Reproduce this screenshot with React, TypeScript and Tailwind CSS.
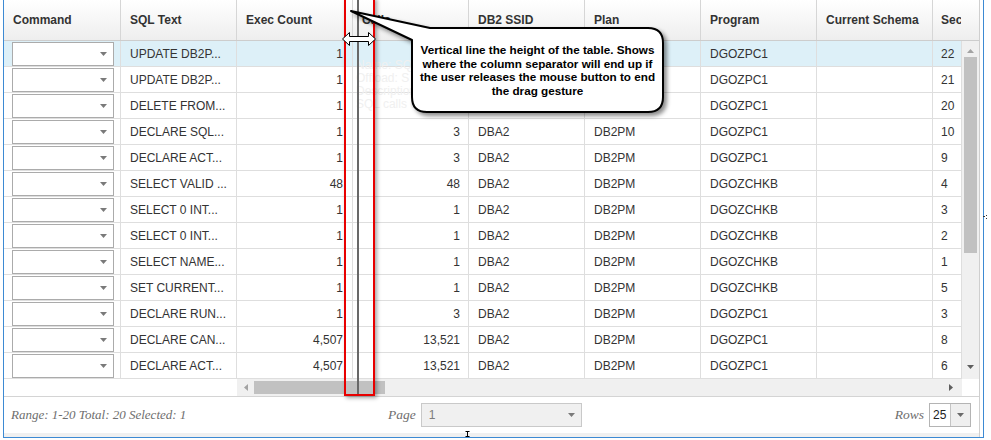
import React from 'react'

interface Row {
  sql: string
  exec: string
  calls: string
  ssid: string
  plan: string
  program: string
  sec: string
}

// first three rows sit under the callout, their middle cells are hidden there
const rows: Row[] = [
  { sql: 'UPDATE DB2P...', exec: '1', calls: '', ssid: '', plan: '', program: 'DGOZPC1', sec: '22' },
  { sql: 'UPDATE DB2P...', exec: '1', calls: '', ssid: '', plan: '', program: 'DGOZPC1', sec: '21' },
  { sql: 'DELETE FROM...', exec: '1', calls: '', ssid: '', plan: '', program: 'DGOZPC1', sec: '20' },
  { sql: 'DECLARE SQL...', exec: '1', calls: '3', ssid: 'DBA2', plan: 'DB2PM', program: 'DGOZPC1', sec: '10' },
  { sql: 'DECLARE ACT...', exec: '1', calls: '3', ssid: 'DBA2', plan: 'DB2PM', program: 'DGOZPC1', sec: '9' },
  { sql: 'SELECT VALID ...', exec: '48', calls: '48', ssid: 'DBA2', plan: 'DB2PM', program: 'DGOZCHKB', sec: '4' },
  { sql: 'SELECT 0 INT...', exec: '1', calls: '1', ssid: 'DBA2', plan: 'DB2PM', program: 'DGOZCHKB', sec: '3' },
  { sql: 'SELECT 0 INT...', exec: '1', calls: '1', ssid: 'DBA2', plan: 'DB2PM', program: 'DGOZCHKB', sec: '2' },
  { sql: 'SELECT NAME...', exec: '1', calls: '1', ssid: 'DBA2', plan: 'DB2PM', program: 'DGOZCHKB', sec: '1' },
  { sql: 'SET CURRENT...', exec: '1', calls: '1', ssid: 'DBA2', plan: 'DB2PM', program: 'DGOZCHKB', sec: '5' },
  { sql: 'DECLARE RUN...', exec: '1', calls: '3', ssid: 'DBA2', plan: 'DB2PM', program: 'DGOZPC1', sec: '3' },
  { sql: 'DECLARE CAN...', exec: '4,507', calls: '13,521', ssid: 'DBA2', plan: 'DB2PM', program: 'DGOZPC1', sec: '8' },
  { sql: 'DECLARE ACT...', exec: '4,507', calls: '13,521', ssid: 'DBA2', plan: 'DB2PM', program: 'DGOZPC1', sec: '6' },
]

function Caret({ color = '#7a7a7a', dir = 'down' }: { color?: string; dir?: 'down' | 'up' | 'left' | 'right' }) {
  const pts = {
    down: '0,0 7,0 3.5,4',
    up: '0,4 7,4 3.5,0',
    left: '4,0 4,7 0,3.5',
    right: '0,0 0,7 4,3.5',
  }[dir]
  const horiz = dir === 'down' || dir === 'up'
  return (
    <svg width={horiz ? 7 : 4} height={horiz ? 4 : 7} className="shrink-0">
      <polygon points={pts} fill={color} />
    </svg>
  )
}

function Combo() {
  return (
    <div className="ml-[8px] h-[24px] w-[102px] border border-[#ababab] bg-white flex items-center justify-end pr-[6px]">
      <Caret />
    </div>
  )
}

const cell = 'h-full flex items-center border-r border-[#dedede] whitespace-nowrap overflow-hidden'

export default function App() {
  return (
    <div
      className="relative w-[991px] h-[440px] bg-white overflow-hidden text-[12px] text-[#333]"
      style={{ fontFamily: '"Liberation Sans", Arial, sans-serif' }}
    >
      <div className="ml-[3px] w-[981px] h-[438px] border-l border-r border-b border-[#3d8ad3] pr-[3px]">
        <div className="w-[976px] h-full border-r border-[#cfcfcf] flex flex-col">
          {/* header */}
          <div className="h-[41px] shrink-0 flex border-b border-[#cdcdcd] bg-linear-to-b from-white to-[#eeeeee] font-bold">
            {[
              ['Command', 'w-[117px]'],
              ['SQL Text', 'w-[116px]'],
              ['Exec Count', 'w-[116px]'],
              ['Calls', 'w-[116px]'],
              ['DB2 SSID', 'w-[116px]'],
              ['Plan', 'w-[116px]'],
              ['Program', 'w-[116px]'],
              ['Current Schema', 'w-[116px]'],
            ].map(([label, w]) => (
              <div key={label} className={`${w} h-full flex items-center pl-[9px] border-r border-[#d6d6d6] whitespace-nowrap overflow-hidden`}>
                {label}
              </div>
            ))}
            <div className="w-[28px] h-full flex items-center pl-[8px] whitespace-nowrap overflow-hidden">Sec</div>
            <div className="flex-1" />
          </div>

          {/* body */}
          <div className="h-[338px] shrink-0 flex overflow-hidden">
            <div className="w-[958px] flex flex-col">
              {rows.map((r, i) => (
                <div
                  key={i}
                  className={`h-[26px] shrink-0 flex border-b border-[#dedede] ${i === 0 ? 'bg-[#ddf0f8]' : 'bg-white'}`}
                >
                  <div className={`${cell} w-[117px]`}>
                    <Combo />
                  </div>
                  <div className={`${cell} w-[116px] pl-[9px]`}>{r.sql}</div>
                  <div className={`${cell} w-[116px] justify-end pr-[9px]`}>{r.exec}</div>
                  <div className={`${cell} w-[116px] justify-end pr-[8px]`}>{r.calls}</div>
                  <div className={`${cell} w-[116px] pl-[9px]`}>{r.ssid}</div>
                  <div className={`${cell} w-[116px] pl-[9px]`}>{r.plan}</div>
                  <div className={`${cell} w-[116px] pl-[9px]`}>{r.program}</div>
                  <div className={`${cell} w-[116px]`} />
                  <div className={`${cell} w-[29px] pl-[8px]`}>{r.sec}</div>
                </div>
              ))}
            </div>
            {/* vertical scrollbar */}
            <div className="w-[17px] h-full bg-[#f0f0f0] flex flex-col items-center">
              <div className="h-[16px] flex items-center justify-center pt-[3px]">
                <Caret color="#a3a3a3" dir="up" />
              </div>
              <div className="w-[13px] h-[196px] bg-[#c1c1c1]" />
              <div className="flex-1" />
              <div className="h-[22px] flex items-center justify-center pb-[3px]">
                <Caret color="#5e5e5e" dir="down" />
              </div>
            </div>
          </div>

          {/* horizontal scrollbar */}
          <div className="h-[18px] shrink-0 flex border-b border-[#d4d4d4]">
            <div className="w-[233px] h-full bg-white" />
            <div className="w-[725px] h-full bg-[#f0f0f0] flex items-center">
              <div className="w-[17px] flex justify-center">
                <Caret color="#a3a3a3" dir="left" />
              </div>
              <div className="w-[131px] h-[13px] bg-[#c1c1c1]" />
              <div className="flex-1" />
              <div className="w-[17px] flex justify-center pr-[6px]">
                <Caret color="#5e5e5e" dir="right" />
              </div>
            </div>
            <div className="flex-1 bg-white" />
          </div>

          {/* footer */}
          <div
            className="h-[36px] shrink-0 flex items-center pl-[7px] bg-white italic text-[13px] text-[#6e6e6e]"
            style={{ fontFamily: '"Liberation Serif", "Times New Roman", serif' }}
          >
            <div className="w-[377px]">Range: 1-20 Total: 20 Selected: 1</div>
            <span className="mr-[5px] text-[13.5px]">Page</span>
            <div
              className="w-[161px] h-[24px] border border-[#c9c9c9] bg-[#f0f0f0] flex items-center pl-[7px] pr-[6px] not-italic text-[#7d7d7d] text-[12px]"
              style={{ fontFamily: '"Liberation Sans", Arial, sans-serif' }}
            >
              <span className="flex-1">1</span>
              <Caret />
            </div>
            <div className="flex-1" />
            <span className="mr-[5px] text-[13.5px]">Rows</span>
            <div
              className="mr-[8px] w-[42px] h-[24px] border border-[#b4b4b4] bg-white flex not-italic text-[#222] text-[12px]"
              style={{ fontFamily: '"Liberation Sans", Arial, sans-serif' }}
            >
              <span className="w-[20px] pl-[3px] flex items-center">25</span>
              <div className="flex-1 border-l border-[#c4c4c4] bg-[#efefef] flex items-center justify-center">
                <Caret color="#6a6a6a" />
              </div>
            </div>
          </div>

          {/* bottom strip */}
          <div className="flex-1 bg-[#f0f0f0]" />
        </div>
      </div>

      {/* faint tooltip left behind the callout */}
      <div className="absolute left-[356px] top-[59px] text-[12px] leading-[13px] text-[#f0f0f0] whitespace-nowrap pointer-events-none">
        <div>Name: SQ</div>
        <div>Offload: S</div>
        <div>Description</div>
        <div>SQL calls e</div>
      </div>

      {/* drag guide: vertical line and red highlight */}
      <div className="absolute left-[357px] top-0 w-[2px] h-[396px] bg-[#686868]" />
      <div className="absolute left-[344px] top-[-3px] w-[31px] h-[399px] border-[2.5px] border-[#e80000] shadow-[2px_2px_4px_rgba(0,0,0,0.35)]" />

      {/* resize cursor */}
      <svg className="absolute left-[342px] top-[32px]" width="34" height="14" viewBox="0 0 34 14">
        <polygon
          points="0.5,7 7.5,0.5 7.5,4.5 26.5,4.5 26.5,0.5 33.5,7 26.5,13.5 26.5,9.5 7.5,9.5 7.5,13.5"
          fill="#fff"
          stroke="#000"
          strokeWidth="1"
          strokeLinejoin="miter"
        />
      </svg>

      {/* callout */}
      <svg
        className="absolute left-0 top-0 pointer-events-none drop-shadow-[3px_3px_2px_rgba(0,0,0,0.45)]"
        width="991"
        height="440"
      >
        <path
          d="M 430 28 L 648 28 Q 663 28 663 43 L 663 97 Q 663 112 648 112 L 427 112 Q 412 112 412 97 L 412 40 L 351 11 Z"
          fill="#fff"
          stroke="#000"
          strokeWidth="2"
          strokeLinejoin="round"
        />
      </svg>
      <div className="absolute left-[412px] top-[28px] w-[251px] h-[84px] flex items-center justify-center text-center font-bold text-[11.7px] leading-[13.5px] text-black">
        <div>
          Vertical line the height of the table. Shows
          <br />
          where the column separator will end up if
          <br />
          the user releases the mouse button to end
          <br />
          the drag gesture
        </div>
      </div>

      {/* stray cursor marks */}
      <svg className="absolute left-[465px] top-[431px]" width="5" height="6">
        <path d="M0.5 0.5 H4.5 M2.5 0.5 V5.5 M0.5 5.5 H4.5" stroke="#000" strokeWidth="1" />
      </svg>
      <div className="absolute left-[983px] top-[216px] w-[2px] h-[1px] bg-[#333]" />
      <div className="absolute left-[986px] top-[215px] w-[1px] h-[1px] bg-[#333]" />
      <div className="absolute left-[986px] top-[218px] w-[1px] h-[1px] bg-[#333]" />
    </div>
  )
}
